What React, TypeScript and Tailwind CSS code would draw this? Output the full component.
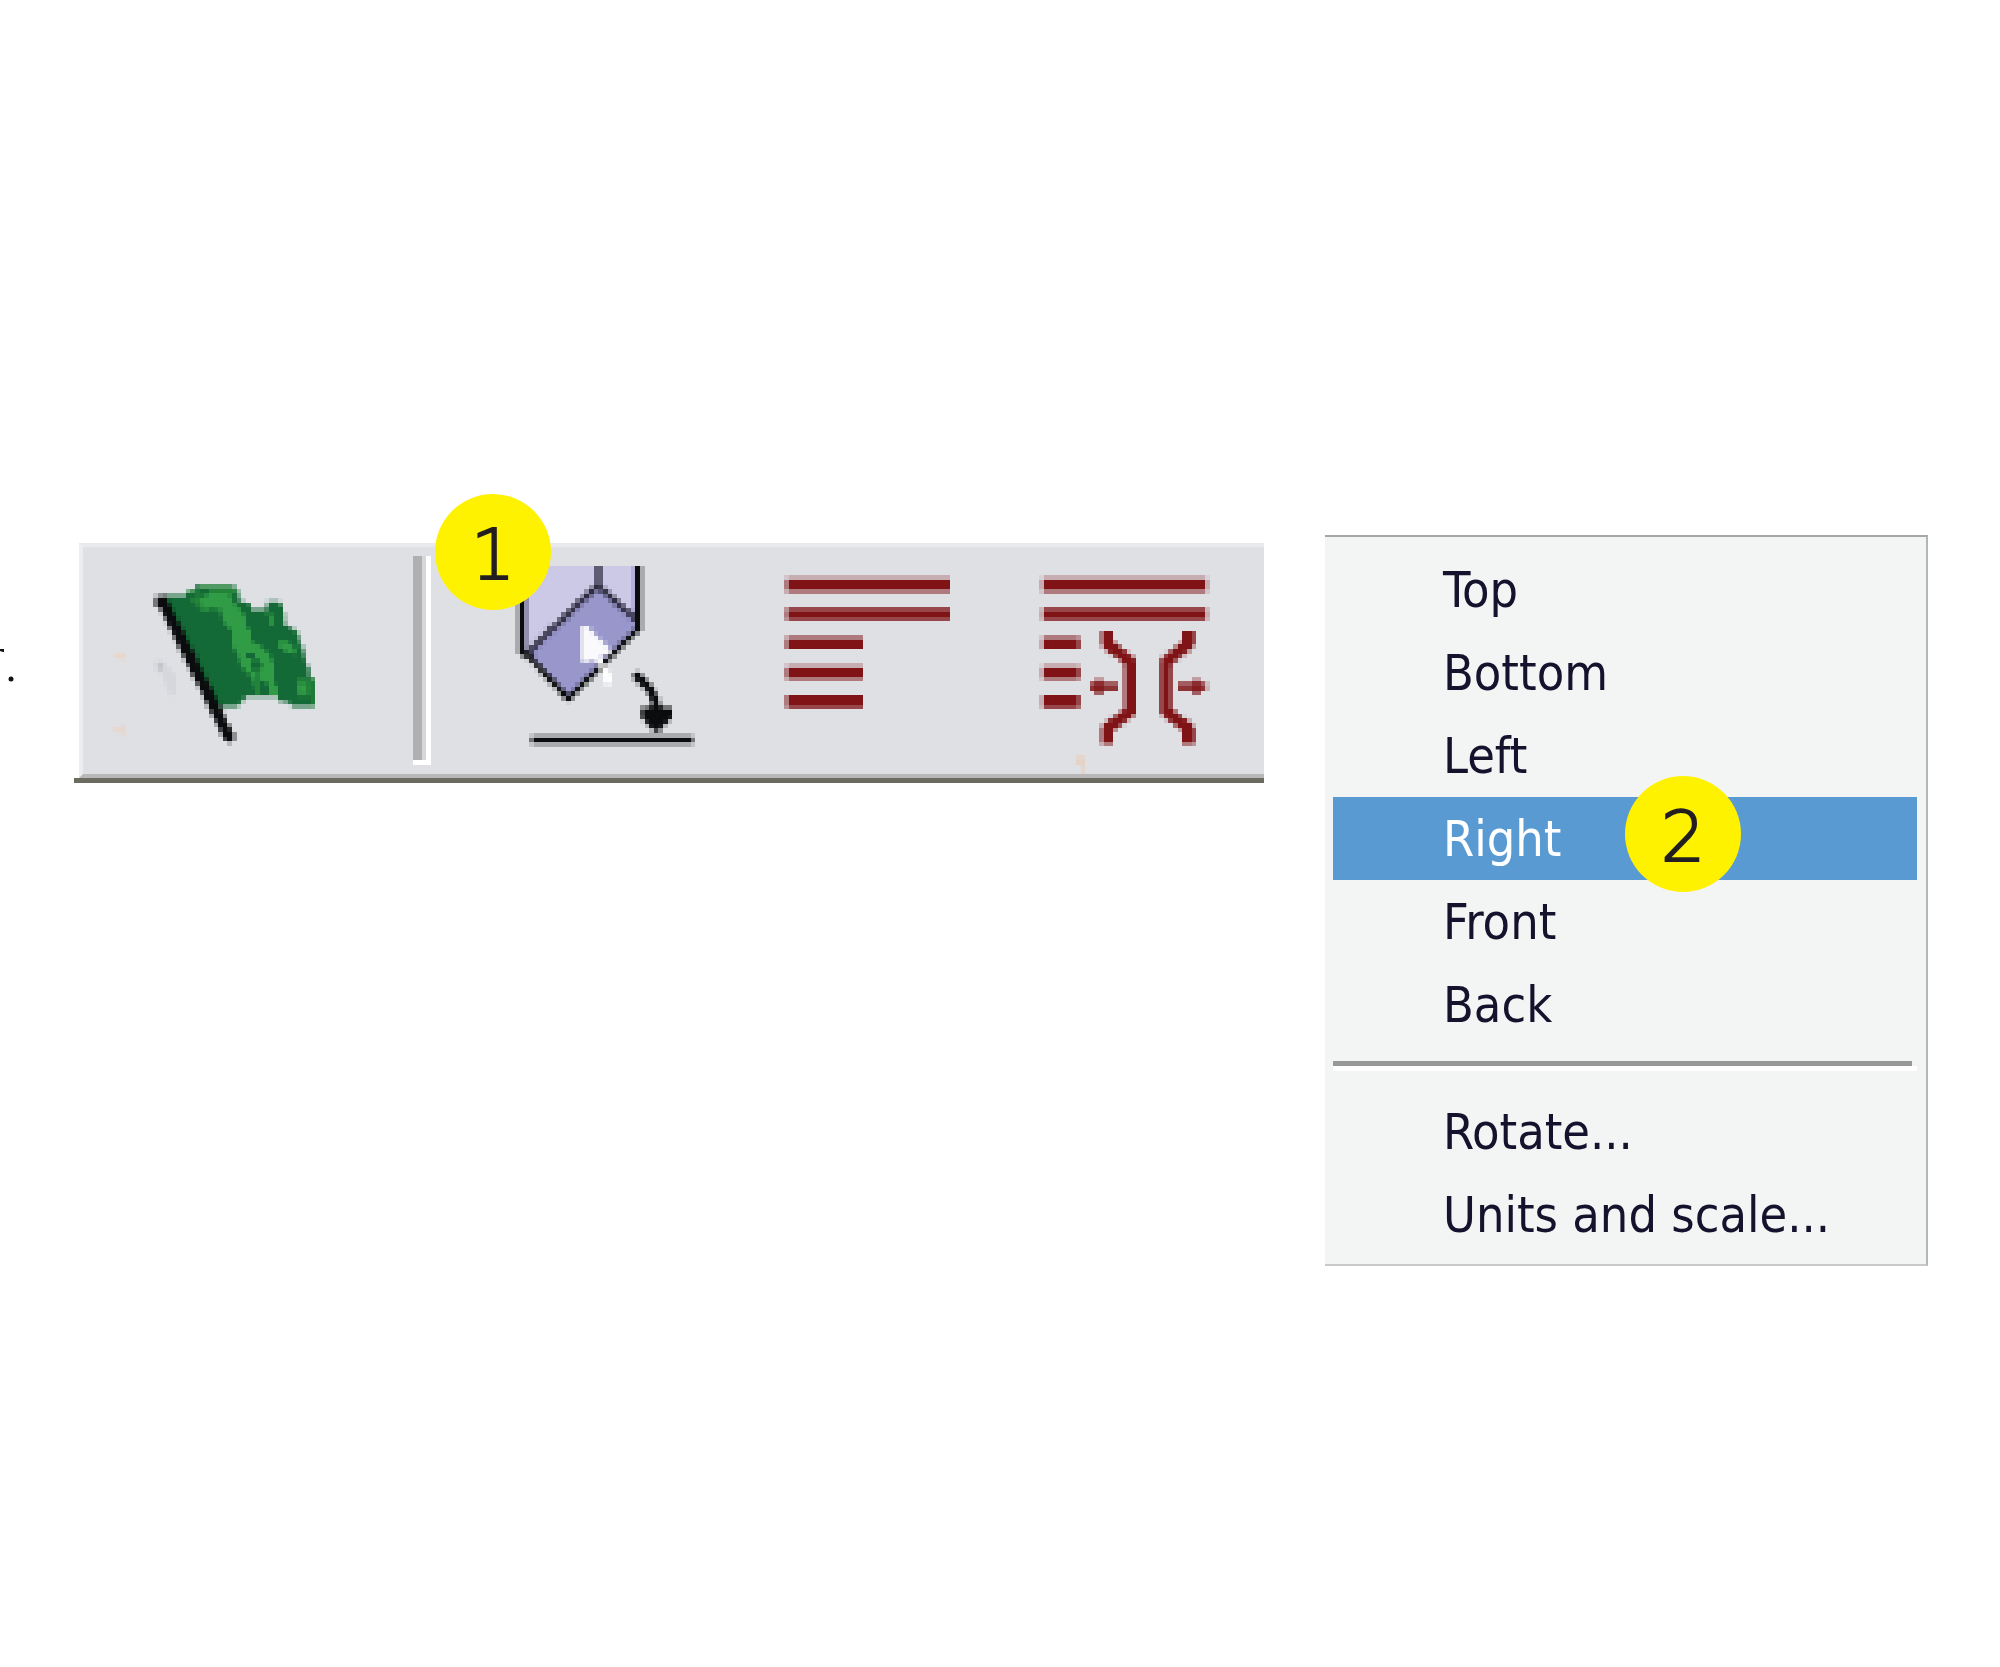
import React from "react";

type Point = [number, number];
type Shape = { color: string; points: Point[]; width?: number; alpha?: number };

/** Size of one icon pixel in drawing units. */
const CELL = 13.9;

function insidePolygon(x: number, y: number, pts: Point[]) {
  let inside = false;
  for (let i = 0, j = pts.length - 1; i < pts.length; j = i++) {
    const [xi, yi] = pts[i];
    const [xj, yj] = pts[j];
    if (yi > y !== yj > y && x < ((xj - xi) * (y - yi)) / (yj - yi) + xi) inside = !inside;
  }
  return inside;
}

function nearLine(x: number, y: number, pts: Point[], width: number) {
  for (let i = 1; i < pts.length; i++) {
    const [ax, ay] = pts[i - 1];
    const dx = pts[i][0] - ax;
    const dy = pts[i][1] - ay;
    const t = Math.max(0, Math.min(1, ((x - ax) * dx + (y - ay) * dy) / (dx * dx + dy * dy)));
    if (Math.hypot(x - ax - t * dx, y - ay - t * dy) <= width / 2) return true;
  }
  return false;
}

const channel = (hex: string, i: number) => parseInt(hex.slice(1 + i * 2, 3 + i * 2), 16);

/** Samples vector shapes on a coarse grid, giving a low-resolution toolbar icon. */
function pixelate(shapes: Shape[], x0: number, y0: number, cols: number, rows: number) {
  const cells: { x: number; y: number; w: number; fill: string }[] = [];
  const n = 4;
  for (let r = 0; r < rows; r++) {
    for (let c = 0; c < cols; c++) {
      const sum = [0, 0, 0, 0];
      for (let s = 0; s < n * n; s++) {
        const x = x0 + (c + ((s % n) + 0.5) / n) * CELL;
        const y = y0 + (r + (Math.floor(s / n) + 0.5) / n) * CELL;
        let px = [0, 0, 0, 0];
        for (const shape of shapes) {
          const hit = shape.width
            ? nearLine(x, y, shape.points, shape.width)
            : insidePolygon(x, y, shape.points);
          if (!hit) continue;
          const a = shape.alpha ?? 1;
          px = px.map((v, i) => v * (1 - a) + (i < 3 ? channel(shape.color, i) : 1) * a);
        }
        px.forEach((v, i) => (sum[i] += v));
      }
      if (sum[3] < 0.01) continue;
      const [R, G, B] = sum.slice(0, 3).map((v) => Math.round(v / sum[3]));
      const fill = `rgba(${R},${G},${B},${(sum[3] / (n * n)).toFixed(2)})`;
      const last = cells[cells.length - 1];
      if (last && last.y === r && last.fill === fill && last.x + last.w === c) last.w++;
      else cells.push({ x: c, y: r, w: 1, fill });
    }
  }
  return cells;
}

const box = (color: string, x1: number, y1: number, x2: number, y2: number, alpha = 1): Shape => ({
  color,
  alpha,
  points: [[x1, y1], [x2, y1], [x2, y2], [x1, y2]],
});

const DARK = "#146a36";
const MID = "#238339";
const LIGHT = "#309d46";
const RED = "#7f1316";
const INK = "#0b0c0d";

const flag: Shape[] = [
  { color: "#f0cdb4", alpha: 0.5, points: [[155, 380], [194, 366], [194, 394]] },
  { color: "#f0cdb4", alpha: 0.5, points: [[150, 603], [194, 588], [194, 617]] },
  { color: "#b4b4ba", alpha: 0.18, points: [[285, 394], [312, 394], [350, 440], [350, 500], [325, 490]] },
  box("#a0a0a8", 288, 398, 308, 424, 0.35),
  {
    color: DARK,
    points: [
      [314, 199], [376, 199], [376, 184], [404, 180], [404, 165], [520, 165], [526, 180], [536, 184],
      [538, 212], [570, 222], [570, 238], [618, 238], [624, 215], [658, 215], [668, 232], [674, 286],
      [692, 292], [716, 312], [722, 348], [730, 352], [738, 402], [746, 412], [750, 444], [764, 444],
      [764, 532], [696, 532], [688, 520], [656, 514], [654, 500], [557, 500], [548, 516], [532, 532],
      [480, 532],
    ],
  },
  box(MID, 418, 165, 515, 178),
  box(MID, 446, 178, 526, 194),
  box(MID, 380, 184, 418, 192),
  { color: MID, points: [[390, 208], [418, 194], [446, 240], [420, 238]] },
  {
    color: LIGHT,
    points: [
      [418, 206], [446, 192], [508, 192], [520, 218], [542, 240], [556, 264], [557, 290], [572, 306],
      [572, 334], [600, 348], [628, 376], [640, 402], [640, 460], [655, 474], [655, 496], [628, 496],
      [624, 460], [598, 452], [590, 498], [572, 440], [546, 416], [530, 374], [516, 348], [516, 304],
      [488, 276], [480, 240], [448, 234], [430, 246],
    ],
  },
  box(DARK, 558, 372, 584, 384),
  box(DARK, 572, 388, 600, 424),
  box(MID, 600, 400, 614, 416),
  box(DARK, 586, 430, 600, 444, 0.6),
  box(DARK, 600, 466, 626, 482, 0.7),
  box(MID, 586, 440, 600, 498),
  box(LIGHT, 626, 258, 638, 288),
  box(MID, 614, 248, 640, 262, 0.6),
  { color: LIGHT, points: [[656, 332], [680, 332], [706, 358], [704, 374], [682, 372], [656, 350]] },
  { color: MID, points: [[710, 444], [738, 444], [750, 462], [750, 500], [710, 500]] },
  box(LIGHT, 712, 462, 738, 492),
  box(MID, 752, 446, 764, 532, 0.7),
  { color: INK, width: 33, points: [[306, 214], [506, 622]] },
  box(INK, 287, 200, 320, 232),
];

const cube: Shape[] = [
  { color: "#cbc9e5", points: [[357, 258], [712, 258], [712, 430], [593, 318], [380, 525], [364, 520]] },
  box("#b9b6e2", 371, 258, 385, 500, 0.7),
  box("#a9a7d8", 691, 258, 706, 400, 0.7),
  { color: "#9896ca", points: [[593, 312], [712, 420], [712, 444], [503, 655], [374, 520]] },
  { color: "#3a3850", width: 18, points: [[593, 250], [593, 312]] },
  { color: "#2f2d42", width: 17, points: [[589, 318], [378, 520]] },
  { color: "#2f2d42", width: 17, points: [[593, 318], [706, 418]] },
  { color: INK, width: 16, points: [[378, 522], [503, 655], [712, 446]] },
  { color: INK, width: 20, points: [[364, 240], [364, 518]] },
  { color: INK, width: 19, points: [[713, 240], [713, 446]] },
  {
    color: "#ffffff",
    alpha: 0.95,
    points: [
      [542, 437], [560, 437], [580, 458], [632, 512], [630, 524], [602, 524], [612, 560], [634, 584],
      [634, 614], [610, 612], [604, 566], [580, 540], [562, 546], [542, 548],
    ],
  },
  { color: INK, width: 25, points: [[710, 588], [746, 624], [766, 664], [768, 690]] },
  { color: INK, points: [[722, 682], [750, 682], [750, 676], [786, 676], [786, 682], [814, 682], [814, 712], [774, 756], [762, 756], [722, 712]] },
  box(INK, 391, 768, 879, 791),
];

const bars = (x1: number, x2: number, x3: number): Shape[] => [
  box(RED, x1, 145, x2, 184),
  box(RED, x1, 236, x2, 272),
  box(RED, x1, 324, x3, 359),
  box(RED, x1, 410, x3, 449),
  box(RED, x1, 497, x3, 535),
];

const wrap: Shape[] = [
  ...bars(847, 1339, 956),
  { color: RED, width: 34, points: [[1039, 324], [1042, 344], [1111, 396], [1111, 546], [1042, 596], [1039, 626]] },
  box(RED, 1022, 303, 1058, 345),
  box(RED, 1022, 596, 1058, 642),
  { color: RED, width: 34, points: [[1286, 324], [1284, 344], [1218, 396], [1218, 546], [1284, 596], [1286, 626]] },
  box(RED, 1268, 303, 1305, 345),
  box(RED, 1268, 596, 1305, 642),
  box(RED, 988, 459, 1072, 483, 0.85),
  box(RED, 1006, 448, 1027, 498, 0.85),
  box(RED, 1254, 459, 1339, 483, 0.85),
  box(RED, 1299, 448, 1320, 498, 0.85),
  box("#eec6a8", 948, 680, 974, 706, 0.5),
  box("#eec6a8", 962, 706, 974, 735, 0.4),
];

type IconProps = { shapes: Shape[]; x: number; y: number; cols: number; rows: number; className: string };

function PixelIcon({ shapes, x, y, cols, rows, className }: IconProps) {
  return (
    <svg
      viewBox={`0 0 ${cols} ${rows}`}
      className={className}
      shapeRendering="crispEdges"
      preserveAspectRatio="none"
      aria-hidden="true"
    >
      {pixelate(shapes, x, y, cols, rows).map((c) => (
        <rect key={`${c.x}-${c.y}`} x={c.x} y={c.y} width={c.w} height={1} fill={c.fill} />
      ))}
    </svg>
  );
}

function Badge({ label, className }: { label: string; className: string }) {
  return (
    <span
      className={`absolute z-10 flex size-[116px] items-center justify-center rounded-full bg-[#fff200] pt-1.5 font-['DejaVu_Sans'] text-[70px] leading-none font-extralight text-[#231f20] [-webkit-text-stroke:2px_#231f20] ${className}`}
    >
      {label}
    </span>
  );
}

function Toolbar() {
  return (
    <div className="mt-2 border-b-[5px] border-[#6c6b60]">
      <div
        role="toolbar"
        aria-label="View"
        className="relative ml-[5px] flex items-stretch border-t-4 border-b-4 border-l-4 border-t-[#e9e9ee] border-b-[#b8b8b9] border-l-[#ededf0] bg-[#dfe0e4]"
      >
        <button type="button" aria-label="Flag" className="flex w-[330px] items-start pt-[37px] pl-6">
          <PixelIcon shapes={flag} x={140} y={163} cols={46} rows={35} className="h-[162px] w-[213px]" />
        </button>
        <div className="my-[9px] flex w-[18px] flex-col">
          <div className="flex flex-1">
            <div className="w-[9px] bg-[#b0b0b3]" />
            <div className="w-1 bg-[#d6d6db]" />
            <div className="w-[5px] bg-white" />
          </div>
          <div className="h-[5px] bg-white" />
        </div>
        <div className="flex items-start gap-[84px] pl-[84px]">
          <button type="button" aria-label="Orient view" className="pt-[19px]">
            <PixelIcon shapes={cube} x={343} y={258} cols={40} rows={39} className="h-[181px] w-[185px]" />
          </button>
          <button type="button" aria-label="Align lines" className="pt-7">
            <PixelIcon shapes={bars(77, 571, 307)} x={70} y={136} cols={37} rows={43} className="h-[199px] w-[171px]" />
          </button>
          <button type="button" aria-label="Wrap lines" className="pt-7">
            <PixelIcon shapes={wrap} x={836} y={136} cols={37} rows={43} className="h-[199px] w-[171px]" />
          </button>
        </div>
        <Badge label="1" className="-top-[53px] left-[352px]" />
      </div>
    </div>
  );
}

function MenuItem({ label, selected, badge }: { label: string; selected?: boolean; badge?: string }) {
  return (
    <li role="none" className="relative">
      <button
        type="button"
        role="menuitem"
        className={`flex h-[83px] w-full items-center pl-[110px] text-left whitespace-nowrap ${
          selected ? "bg-[#5a9ad3] text-white" : "text-[#14122c]"
        }`}
      >
        {label}
      </button>
      {badge && <Badge label={badge} className="-top-[21px] left-[292px]" />}
    </li>
  );
}

function ViewMenu() {
  return (
    <ul
      role="menu"
      className="border-t-2 border-r-2 border-b-2 border-t-[#a5a7a7] border-r-[#b4b6b6] border-b-[#c8caca] bg-[#f3f5f4] pt-[11px] pr-[9px] pb-2 pl-2 font-['DejaVu_Sans_Condensed','DejaVu_Sans',sans-serif] text-[50px] leading-none"
    >
      <MenuItem label="Top" />
      <MenuItem label="Bottom" />
      <MenuItem label="Left" />
      <MenuItem label="Right" selected badge="2" />
      <MenuItem label="Front" />
      <MenuItem label="Back" />
      <li role="separator" className="pt-[15px] pb-[19px]">
        <div className="mr-[5px] h-[5px] bg-[#979797]" />
        <div className="h-[5px] bg-white" />
      </li>
      <MenuItem label="Rotate..." />
      <MenuItem label="Units and scale..." />
    </ul>
  );
}

export default function App() {
  return (
    <main className="relative grid min-h-screen grid-cols-[1190fr_603fr] items-start gap-[61px] bg-white pt-[535px] pr-[72px] pl-[74px]">
      <svg viewBox="0 0 16 36" className="absolute top-[648px] left-0 h-9 w-4" aria-hidden="true">
        <path d="M0 1H4V4H3L0 3Z" fill="#111" />
        <circle cx="11" cy="31" r="2.500" fill="#111" />
      </svg>
      <Toolbar />
      <ViewMenu />
    </main>
  );
}
